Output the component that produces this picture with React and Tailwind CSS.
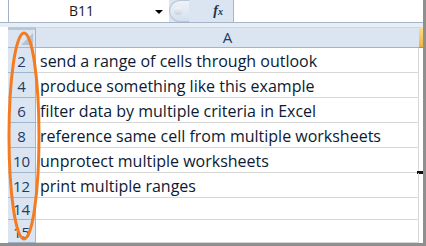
import React from "react";

const rows = [
  { n: "2", text: "send a range of cells through outlook", h: "h-[25px]" },
  { n: "4", text: "produce something like this example", h: "h-[25px]" },
  { n: "6", text: "filter data by multiple criteria in Excel", h: "h-[25px]" },
  { n: "8", text: "reference same cell from multiple worksheets", h: "h-[25px]" },
  { n: "10", text: "unprotect multiple worksheets", h: "h-[25px]" },
  { n: "12", text: "print multiple ranges", h: "h-[25px]" },
  { n: "14", text: "", h: "h-[22px]" },
  { n: "15", text: "", h: "h-[23px]" },
];

export default function App() {
  return (
    <div className="relative w-[426px] h-[246px] overflow-hidden bg-white flex font-['Open_Sans',sans-serif]">
      <div className="w-[423px] h-[243px] flex flex-col">
        {/* formula bar */}
        <div className="h-[22px] flex border-l border-[#a3b3c6] ml-[8px]">
          <div className="w-[160px] bg-white relative flex items-center">
            <span className="absolute left-[60px] top-[4px] text-[14px] text-[#1a1a1a] leading-none">
              B11
            </span>
            <span className="absolute left-[146px] top-[10px] w-0 h-0 border-l-[4px] border-r-[4px] border-t-[4px] border-l-transparent border-r-transparent border-t-black"></span>
          </div>
          <div className="flex-1 bg-[#dbe5f1] flex">
            <div className="w-[20px] h-[22px] rounded-l-full bg-gradient-to-b from-[#eef3f9] to-[#d5e0ee] border border-[#b7c6d8] border-r-0 flex items-center pl-[4px]">
              <div className="w-[8px] h-[8px] rounded-full bg-gradient-to-b from-[#f4f6f9] to-[#c7d0dc]"></div>
            </div>
            <div className="w-[44px] flex items-center justify-end pr-[10px]">
              <span className="font-['Liberation_Serif',serif] italic font-bold text-[14px] text-[#22324a] leading-none">
                f<span className="text-[10px]">x</span>
              </span>
            </div>
            <div className="flex-1 bg-white border-l border-[#a7b7ca]"></div>
          </div>
        </div>
        <div className="h-[1px] bg-[#a5b5c8]"></div>
        <div className="h-[4px] bg-[#e7eef6]"></div>

        {/* column header */}
        <div className="h-[21px] flex">
          <div className="w-[8px] bg-white"></div>
          <div className="w-[28px] bg-[#dbe5f1] border-t-[3px] border-[#b8c8da] border-b border-b-[#9eb6ce] border-r border-r-[#9eb6ce] relative">
            <span className="absolute right-[2px] bottom-[2px] w-0 h-0 border-l-[12px] border-t-[12px] border-l-transparent border-t-transparent" style={{ borderBottom: "12px solid #b3c3d6" }}></span>
          </div>
          <div className="flex-1 bg-[#dbe5f1] border-t border-[#c9d6e5] border-b border-b-[#9eb6ce] flex items-center justify-center text-[15px] text-[#1b3a66]">
            A
          </div>
          <div className="w-[4px] bg-gradient-to-b from-[#fbe08a] to-[#f2b23a] border-b border-[#c98f2a]"></div>
        </div>

        {/* rows */}
        {rows.map((r) => (
          <div key={r.n} className={`${r.h} flex`}>
            <div className="w-[8px] bg-white"></div>
            <div className="w-[28px] bg-[#dbe5f1] border-b border-[#9eb6ce] border-r border-r-[#9eb6ce] flex items-center justify-center pt-[2px] text-[15px] text-[#1f3b66]">
              {r.n}
            </div>
            <div className="flex-1 border-b border-[#d8d8d8] border-r border-r-[#d8d8d8] flex items-center pl-[4px] pt-[2px] text-[16px] text-[#0c1a33] whitespace-nowrap relative">
              {r.text}
              {r.n === "10" && (
                <span className="absolute right-[-5px] bottom-[-2px] w-[6px] h-[3px] bg-[#111]"></span>
              )}
            </div>
            <div className="w-[4px]"></div>
          </div>
        ))}
      </div>
      <div className="w-[3px] h-full bg-[#8f8f8f]"></div>
      <div className="absolute left-0 bottom-0 w-full h-[3px] bg-[#8f8f8f]"></div>

      {/* orange circle marker */}
      <svg className="absolute left-0 top-0" width="60" height="246" viewBox="0 0 60 246">
        <ellipse cx="24" cy="136" rx="15" ry="103" fill="none" stroke="#f47b20" strokeWidth="3" />
      </svg>
    </div>
  );
}
